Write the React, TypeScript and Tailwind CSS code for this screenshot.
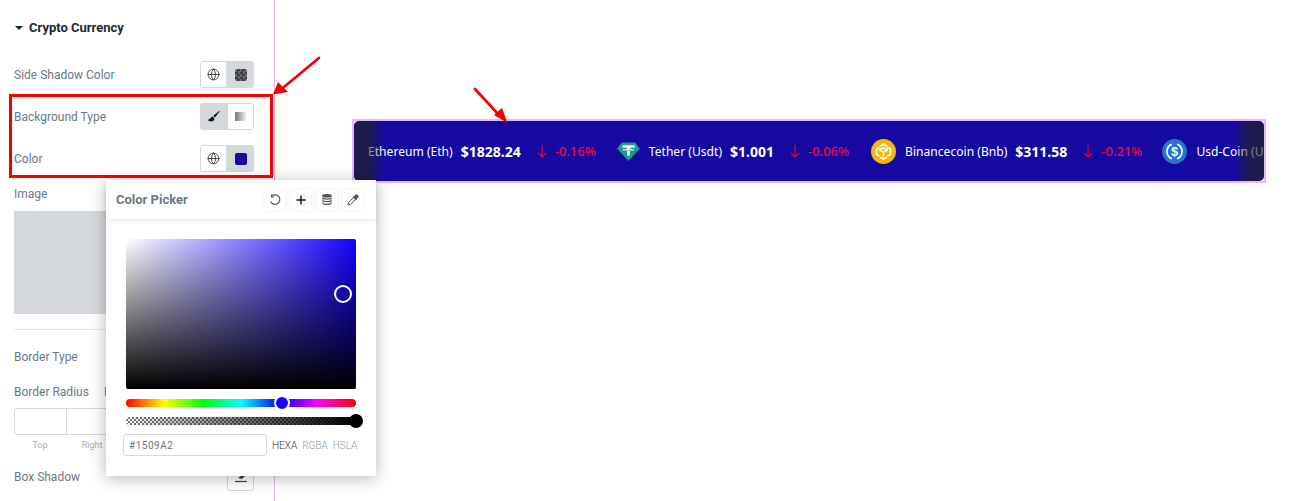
// App.tsx
import React from 'react';
import { Globe, Plus } from 'lucide-react';

function Segment({ children, active }: { children: React.ReactNode; active?: boolean }) {
  return (
    <div className={`w-[27px] h-[27px] flex items-center justify-center ${active ? 'bg-[#d5d8dc]' : 'bg-white border border-[#d5d8dc]'}`}>
      {children}
    </div>
  );
}

function Brush() {
  return (
    <svg width="13" height="13" viewBox="0 0 12 12">
      <path d="M11.6 .6 L5.8 5.4 L7.4 7 L12 1 Z" fill="#111" />
      <path d="M5.2 6 C3.2 6.2 3.8 8.6 .6 9 C2.4 11.4 7 11 6.8 7.6 Z" fill="#111" />
    </svg>
  );
}

function Row({ label, className, children }: { label: string; className: string; children?: React.ReactNode }) {
  return (
    <div className={`flex items-center justify-between ${className}`}>
      <span>{label}</span>
      {children}
    </div>
  );
}

function Control({ children }: { children: React.ReactNode }) {
  return <div className="flex rounded-[3px] overflow-hidden">{children}</div>;
}

function SidePanel() {
  return (
    <div className="w-[275px] h-[501px] shrink-0 border-r border-[#e6b4f2] pl-[14px] pr-[20px] text-[12px] text-[#6d7882] overflow-hidden">
      <div className="h-[56px] flex items-center gap-[6px] text-[13px] text-[#1f2933] font-bold">
        <span className="ml-[1px] w-0 h-0 border-x-[4px] border-x-transparent border-t-[4px] border-t-[#222]" />
        <span>Crypto Currency</span>
      </div>
      <Row label="Side Shadow Color" className="h-[27px] mt-[5px]">
        <Control>
          <Segment><Globe size={13} strokeWidth={1.6} color="#333" /></Segment>
          <Segment active>
            <div className="w-[12px] h-[12px] rounded-[2px] bg-[repeating-conic-gradient(#3c3c3c_0_25%,#6a6a6a_0_50%)] bg-[length:5px_5px]" />
          </Segment>
        </Control>
      </Row>
      <Row label="Background Type" className="h-[27px] mt-[15px]">
        <Control>
          <Segment active><Brush /></Segment>
          <Segment>
            <div className="w-[11px] h-[9px] bg-[linear-gradient(to_right,#777,#eee)]" />
          </Segment>
        </Control>
      </Row>
      <Row label="Color" className="h-[27px] mt-[15px]">
        <Control>
          <Segment><Globe size={13} strokeWidth={1.6} color="#333" /></Segment>
          <Segment active><div className="w-[12px] h-[12px] rounded-[2px] bg-[#1509a2]" /></Segment>
        </Control>
      </Row>
      <div className="mt-[13px] h-[17px] flex items-center">Image</div>
      <div className="mt-[9px] h-[103px] bg-[#d5d8dc]" />
      <div className="mt-[15px] border-t border-[#e6e9ec]" />
      <Row label="Border Type" className="h-[17px] mt-[18px]" />
      <div className="h-[17px] mt-[18px] flex items-center">
        <span>Border Radius</span>
        <span className="ml-[15px]">D</span>
      </div>
      <div className="mt-[8px] flex w-[156px] h-[27px] border border-[#d5d8dc] rounded-[3px]">
        <div className="w-[52px] border-r border-[#d5d8dc]" />
      </div>
      <div className="mt-[4px] flex w-[156px] text-[9px] text-[#a4afb7]">
        <span className="w-[52px] text-center">Top</span>
        <span className="w-[52px] text-center">Right</span>
      </div>
      <Row label="Box Shadow" className="h-[27px] mt-[11px]">
        <div className="w-[27px] h-[27px] border border-[#d5d8dc] rounded-[3px] flex items-center justify-center">
          <svg width="12" height="12" viewBox="0 0 12 12">
            <path d="M3 7 L8 3 L10 5 L7 8 Z" fill="#444" />
            <path d="M0 10.5 H12" stroke="#444" strokeWidth="1.2" />
          </svg>
        </div>
      </Row>
    </div>
  );
}

function TetherIcon() {
  return (
    <svg width="23" height="19" viewBox="0 0 24 20">
      <path d="M5 0.5 H19 L24 7 L12 20 L0 7 Z" fill="#1a9a8a" />
      <path d="M5.5 3.5 H18.5 V6 H13.4 V7.2 C16 7.3 18 7.8 18 8.4 C18 9 16 9.5 13.4 9.6 V14.5 H10.6 V9.6 C8 9.5 6 9 6 8.4 C6 7.8 8 7.3 10.6 7.2 V6 H5.5 Z" fill="#fff" />
      <path d="M7 8.4 C8.5 8.9 15.5 8.9 17 8.4" stroke="#1a9a8a" strokeWidth=".8" fill="none" />
    </svg>
  );
}

function BnbIcon() {
  return (
    <svg width="25" height="25" viewBox="0 0 25 25">
      <circle cx="12.5" cy="12.5" r="12.5" fill="#f0b90b" />
      <g fill="none" stroke="#fff" strokeWidth="1.5" strokeLinejoin="round">
        <path d="M8.5 7.5 L12.5 5 L16.5 7.5" />
        <path d="M5.5 10 L8.5 8.4 M16.5 8.4 L19.5 10 V15.5 L16.5 17.2" />
        <path d="M5.5 10 V15.5 L8.5 17.2" />
        <path d="M8.5 11 L12.5 13.2 L16.5 11 L12.5 8.6 Z" />
        <path d="M12.5 13.2 V17.5 M9 18.2 L12.5 20.2 L16 18.2" />
      </g>
    </svg>
  );
}

function UsdcIcon() {
  return (
    <svg width="25" height="25" viewBox="0 0 25 25">
      <circle cx="12.5" cy="12.5" r="12.5" fill="#2775ca" />
      <path d="M9.8 5.3 A7.8 7.8 0 0 0 9.8 19.7 M15.2 5.3 A7.8 7.8 0 0 1 15.2 19.7" fill="none" stroke="#fff" strokeWidth="1.7" />
      <text x="12.5" y="16.8" textAnchor="middle" fontSize="12" fontWeight="700" fill="#fff" fontFamily="Liberation Sans, sans-serif">$</text>
    </svg>
  );
}

function Coin({ icon, name, price, change, gap }: { icon?: React.ReactNode; name: string; price?: string; change?: string; gap: string }) {
  return (
    <div className={`flex items-center shrink-0 ${gap}`}>
      {icon}
      <span className="text-[12.1px] text-white whitespace-nowrap ml-[9px] mt-[2px]">{name}</span>
      {price && <span className="text-[14px] font-bold text-white ml-[8px]">{price}</span>}
      {change && (
        <>
          <svg className="ml-[16px]" width="10" height="13" viewBox="0 0 10 13">
            <path d="M5 0 V12 M1 8 L5 12 L9 8" fill="none" stroke="#f00018" strokeWidth="1.2" />
          </svg>
          <span className="text-[13px] font-medium text-[#f0083c] ml-[8px] mt-[1px]">{change}</span>
        </>
      )}
    </div>
  );
}

function Ticker() {
  return (
    <div className="mt-[119px] ml-[77px] w-[914px] h-[64px] border-2 border-[#eab8f7]">
      <div className="relative h-full pt-[1px] bg-[#1509a2] rounded-[5px] overflow-hidden flex items-center pl-[5px] font-['Noto_Sans',sans-serif]">
        <Coin name="Ethereum (Eth)" price="$1828.24" change="-0.16%" gap="" />
        <Coin icon={<TetherIcon />} name="Tether (Usdt)" price="$1.001" change="-0.06%" gap="ml-[21px]" />
        <Coin icon={<BnbIcon />} name="Binancecoin (Bnb)" price="$311.58" change="-0.21%" gap="ml-[22px]" />
        <Coin icon={<UsdcIcon />} name="Usd-Coin (Usdc)" gap="ml-[20px]" />
        <div className="absolute inset-y-0 left-0 w-[30px] bg-[linear-gradient(to_right,rgba(37,39,23,0.6)_50%,rgba(37,39,23,0))]" />
        <div className="absolute inset-y-0 right-0 w-[30px] bg-[linear-gradient(to_left,rgba(37,39,23,0.6)_50%,rgba(37,39,23,0))]" />
      </div>
    </div>
  );
}

function PickerTool({ children }: { children: React.ReactNode }) {
  return (
    <div className="w-[20px] h-[20px] rounded-[3px] bg-white shadow-[0_0_5px_rgba(0,0,0,0.08)] flex items-center justify-center">
      {children}
    </div>
  );
}

function ColorPicker() {
  return (
    <div className="absolute left-[106px] top-[180px] w-[270px] h-[296px] bg-white shadow-[0_2px_15px_rgba(0,0,0,0.3)]">
      <div className="h-[39px] pl-[10px] pr-[13px] flex items-center justify-between shadow-[0_2px_4px_rgba(0,0,0,0.08)]">
        <span className="text-[13px] font-bold text-[#6d7882]">Color Picker</span>
        <div className="flex gap-[6px]">
          <PickerTool>
            <svg width="12" height="12" viewBox="0 0 12 12" fill="none" stroke="#555" strokeWidth="1.2">
              <path d="M3 1.8 A4.8 4.8 0 1 1 1.6 7.6" />
              <path d="M2.6 .4 V3 H5.2" />
            </svg>
          </PickerTool>
          <PickerTool><Plus size={14} strokeWidth={2.4} color="#111" /></PickerTool>
          <PickerTool>
            <svg width="10" height="12" viewBox="0 0 10 12" fill="none" stroke="#555" strokeWidth="1.2">
              <ellipse cx="5" cy="1.8" rx="4.2" ry="1.2" fill="#555" />
              <path d="M.8 4.2 C2 5.3 8 5.3 9.2 4.2 M.8 6.8 C2 7.9 8 7.9 9.2 6.8 M.8 9.4 C2 10.7 8 10.7 9.2 9.4" />
              <path d="M.8 1.8 V9.4 M9.2 1.8 V9.4" strokeWidth=".6" />
            </svg>
          </PickerTool>
          <PickerTool>
            <svg width="12" height="12" viewBox="0 0 12 12">
              <path d="M8.2 .9 C9 .1 10.2 .1 11 .9 C11.8 1.7 11.8 2.9 11 3.7 L9.6 5.1 L10 5.5 L9 6.5 L5.5 3 L6.5 2 L6.9 2.4 Z" fill="#555" />
              <path d="M6 4 L1.6 8.4 L1 11 L3.6 10.4 L8 6" fill="none" stroke="#555" strokeWidth="1" />
            </svg>
          </PickerTool>
        </div>
      </div>
      <div className="mt-[20px] mx-[20px]">
        <div className="relative h-[150px] rounded-[2px] overflow-hidden bg-[linear-gradient(to_right,#fff,#1500ff)]">
          <div className="absolute inset-0 bg-[linear-gradient(to_top,#000,rgba(0,0,0,0))]" />
          <div className="absolute left-[208px] top-[46px] w-[18px] h-[18px] rounded-full border-2 border-white" />
        </div>
        <div className="relative mt-[10px] h-[8px] rounded-full bg-[linear-gradient(to_right,#f00,#ff0,#0f0,#0ff,#00f,#f0f,#f00)]">
          <div className="absolute left-[148px] top-[-4px] w-[16px] h-[16px] rounded-full bg-[#1500ff] border-2 border-white" />
        </div>
        <div className="relative mt-[10px] h-[8px] rounded-l-full bg-[repeating-conic-gradient(#777_0_25%,#fff_0_50%)] bg-[length:4px_4px]">
          <div className="absolute inset-0 bg-[linear-gradient(to_right,rgba(0,0,0,0),#000)]" />
          <div className="absolute right-[-7px] top-[-3px] w-[14px] h-[14px] rounded-full bg-black" />
        </div>
      </div>
      <div className="mt-[9px] ml-[17px] flex items-center">
        <div className="w-[144px] h-[22px] border border-[#d5d8dc] rounded-[3px] pl-[5px] flex items-center text-[10px] tracking-[0.5px] text-[#6d7882]">
          #1509A2
        </div>
        <div className="ml-[5px] flex gap-[5px] text-[10px] font-light text-[#8d99a3]">
          <span className="text-[#333]">HEXA</span>
          <span>RGBA</span>
          <span>HSLA</span>
        </div>
      </div>
    </div>
  );
}

function Annotations() {
  return (
    <>
      <div className="absolute left-[9px] top-[94px] w-[264px] h-[84px] border-[3px] border-[#f00000]" />
      <svg className="absolute left-0 top-0 pointer-events-none" width="600" height="140" viewBox="0 0 600 140">
        <path d="M319 58 L284 87" stroke="#f00000" strokeWidth="2.7" strokeLinecap="round" />
        <path d="M273 94.5 L278 82 L288 92 Z" fill="#f00000" />
        <path d="M475 89 L498 114" stroke="#f00000" strokeWidth="2.7" strokeLinecap="round" />
        <path d="M507.5 123 L494 115 L502 108 Z" fill="#f00000" />
      </svg>
    </>
  );
}

export default function App() {
  return (
    <div className="relative flex w-[1300px] h-[501px] overflow-hidden bg-white font-['Roboto',sans-serif]">
      <SidePanel />
      <Ticker />
      <ColorPicker />
      <Annotations />
    </div>
  );
}
